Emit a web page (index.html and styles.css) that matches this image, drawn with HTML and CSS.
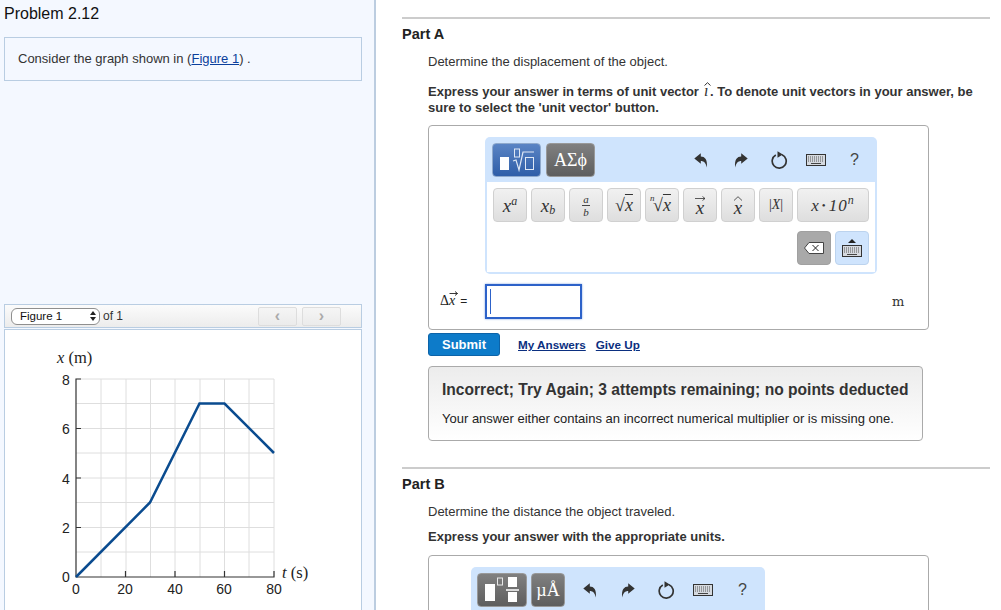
FILE: index.html
```html
<!DOCTYPE html>
<html lang="en">
<head>
<meta charset="utf-8">
<title>Problem 2.12</title>
<link rel="stylesheet" href="styles.css">
</head>
<body>
<svg class="defs" width="0" height="0" aria-hidden="true">
  <symbol id="i-undo" viewBox="0 0 14 15"><path d="M0.300 5.500 L6.800 0.300 V3.400 C10.800 3.400 13.800 6.500 12.800 14.500 C11.800 10 10 8 6.800 8 V10.800 Z" fill="#333"/></symbol>
  <symbol id="i-redo" viewBox="0 0 14 15"><path d="M13.700 5.500 L7.200 0.300 V3.400 C3.200 3.400 0.200 6.500 1.200 14.500 C2.200 10 4 8 7.200 8 V10.800 Z" fill="#333"/></symbol>
  <symbol id="i-reset" viewBox="0 0 18 18"><path d="M5.800 4 A7 7 0 1 0 12 3.700" fill="none" stroke="#333" stroke-width="1.700"/><path d="M7.500 0.300 L12.800 3.500 L7.500 6.700 Z" fill="#333"/></symbol>
  <symbol id="i-kbd" viewBox="0 0 20 12"><rect x="0.500" y="0.500" width="19" height="11" fill="#d5d9df" stroke="#333"/><path d="M2 3h16M2 5h16M2 7h16" stroke="#555" stroke-dasharray="1 1"/><path d="M5 9.500h10" stroke="#444"/></symbol>
</svg>
<div class="page">
  <aside class="side">
    <h1 class="problem-title">Problem 2.12</h1>
    <div class="intro">Consider the graph shown in (<a href="#">Figure 1</a>) .</div>
    <div class="spacer"></div>
    <div class="figure-bar">
      <div class="figure-select"><span>Figure 1</span><span class="updown"><i class="up"></i><i class="down"></i></span></div>
      <span class="of">of 1</span>
      <div class="pager">
        <span class="page-btn">&lsaquo;</span>
        <span class="page-btn">&rsaquo;</span>
      </div>
    </div>
    <div class="figure-box">
      <svg class="graph" width="362" height="281" viewBox="0 329 362 281">
        <g class="grid">
          <path d="M101 379V577M126 379V577M150.500 379V577M175 379V577M200 379V577M224.500 379V577M249 379V577M274 379V577"/>
          <path d="M76 379H274M76 403.500H274M76 428.500H274M76 453H274M76 478H274M76 502.500H274M76 527.500H274M76 552H274"/>
        </g>
        <path class="axis" d="M81 379H76V577H274V571M76 428.500H81M76 478H81M76 527.500H81M125.500 577V571M175 577V571M224.500 577V571"/>
        <path class="curve" d="M76 577 L150 502.500 L199.500 403.500 L224.500 403.500 L274 453"/>
        <text class="ax-serif" x="57" y="363"><tspan class="it">x</tspan> (m)</text>
        <text class="ax-serif" x="282" y="578"><tspan class="it">t</tspan> (s)</text>
        <g class="ax-num">
          <text x="66" y="385" text-anchor="middle">8</text>
          <text x="66" y="434" text-anchor="middle">6</text>
          <text x="66" y="484" text-anchor="middle">4</text>
          <text x="66" y="533" text-anchor="middle">2</text>
          <text x="66" y="582" text-anchor="middle">0</text>
          <text x="76" y="594" text-anchor="middle">0</text>
          <text x="125" y="594" text-anchor="middle">20</text>
          <text x="175" y="594" text-anchor="middle">40</text>
          <text x="224" y="594" text-anchor="middle">60</text>
          <text x="274" y="594" text-anchor="middle">80</text>
        </g>
      </svg>
    </div>
  </aside>
  <main class="main">
    <section class="part part-a">
      <h2 class="part-title">Part A</h2>
      <div class="part-body">
        <p class="prompt">Determine the displacement of the object.</p>
        <p class="instruction">Express your answer in terms of unit vector <span class="unit-i"><svg class="hat" width="7" height="4" viewBox="0 0 7 4"><path d="M.5 3.500L3.500 .7l3 2.800" fill="none" stroke="#333"/></svg>&imath;</span>. To denote unit vectors in your answer, be sure to select the 'unit vector' button.</p>
        <div class="answer-box">
          <div class="toolbar">
            <div class="tool-head">
              <button class="mode mode-on"><svg width="36" height="24" viewBox="0 0 36 24"><rect x="1" y="9" width="9" height="13" fill="#fff"/><rect x="15.500" y="1" width="5" height="8" fill="none" stroke="#dfe8f5"/><path d="M14 13l3-1 3 10 4-18h11" fill="none" stroke="#dfe8f5" stroke-width="1.200"/><rect x="26.500" y="9.500" width="8" height="12" fill="none" stroke="#dfe8f5"/></svg></button>
              <button class="mode mode-off">&Alpha;&Sigma;&#981;</button>
              <div class="actions">
                <svg class="act-undo" width="14" height="15"><use href="#i-undo"/></svg>
                <svg class="act-redo" width="14" height="15"><use href="#i-redo"/></svg>
                <svg class="act-reset" width="18" height="18"><use href="#i-reset"/></svg>
                <svg class="act-kbd" width="20" height="12"><use href="#i-kbd"/></svg>
                <span class="act-help">?</span>
              </div>
            </div>
            <div class="tool-body">
              <div class="key-row">
                <button class="key"><i>x<sup>a</sup></i></button>
                <button class="key"><i>x<sub>b</sub></i></button>
                <button class="key"><span class="frac"><i>a</i><i>b</i></span></button>
                <button class="key"><span class="root">&radic;<i class="over">x</i></span></button>
                <button class="key"><span class="root"><i class="idx">n</i>&radic;<i class="over">x</i></span></button>
                <button class="key"><span class="accent"><svg width="12" height="5" viewBox="0 0 12 5"><path d="M1 2.500h10M8.500 .5l2.500 2-2.500 2" fill="none" stroke="#333" stroke-width=".8"/></svg><i>x</i></span></button>
                <button class="key"><span class="accent"><svg width="10" height="5" viewBox="0 0 10 5"><path d="M1 4.500L5 .7l4 3.800" fill="none" stroke="#333" stroke-width=".8"/></svg><i>x</i></span></button>
                <button class="key abs">|<i>X</i>|</button>
                <button class="key wide"><i>x</i><span class="dot">&bull;</span><i>10<sup>n</sup></i></button>
              </div>
              <div class="key-row end">
                <button class="key del"><svg width="20" height="12" viewBox="0 0 20 12"><path d="M5 .5H19.500V11.500H5L.5 6Z" fill="#fff" stroke="#444"/><path d="M8.500 3l6 6M14.500 3l-6 6" stroke="#222"/></svg></button>
                <button class="key kbd-toggle"><svg width="20" height="20" viewBox="0 0 20 20"><path d="M6 5l4-4 4 4Z" fill="#222"/><rect x=".5" y="7.500" width="19" height="11" fill="#d5d9df" stroke="#333"/><path d="M2 10h16M2 12h16M2 14h16" stroke="#555" stroke-dasharray="1 1"/><path d="M5 16.500h10" stroke="#444"/></svg></button>
              </div>
            </div>
          </div>
          <div class="input-row">
            <span class="input-label">&Delta;<span class="vec"><svg class="vec-arrow" width="9" height="5" viewBox="0 0 9 5"><path d="M.5 2.500h8M6 .5l2.500 2-2.500 2" fill="none" stroke="#222" stroke-width=".9"/></svg>x</span><span class="eq">=</span></span>
            <div class="math-input"><span class="caret"></span></div>
            <span class="unit">m</span>
          </div>
        </div>
        <div class="submit-row">
          <button class="submit">Submit</button>
          <a class="link first" href="#">My Answers</a>
          <a class="link" href="#">Give Up</a>
        </div>
        <div class="feedback">
          <h3 class="fb-title">Incorrect; Try Again; 3 attempts remaining; no points deducted</h3>
          <p class="fb-text">Your answer either contains an incorrect numerical multiplier or is missing one.</p>
        </div>
      </div>
    </section>
    <section class="part part-b">
      <h2 class="part-title">Part B</h2>
      <div class="part-body">
        <p class="prompt">Determine the distance the object traveled.</p>
        <p class="instruction single">Express your answer with the appropriate units.</p>
        <div class="answer-box cut">
          <div class="toolbar small">
            <div class="tool-head">
              <button class="mode mode-off units"><svg width="36" height="26" viewBox="0 0 36 26"><rect x="1" y="7" width="10" height="17" fill="#fff"/><rect x="13.500" y="1" width="5" height="7" fill="none" stroke="#e8e8e8"/><rect x="24" y="0" width="9" height="10" fill="#fff"/><path d="M22 13h13" stroke="#fff" stroke-width="1.500"/><rect x="24" y="15" width="9" height="10" fill="#fff"/></svg></button>
              <button class="mode mode-off unit-sym">&micro;&Aring;</button>
              <div class="actions">
                <svg class="act-undo" width="14" height="15"><use href="#i-undo"/></svg>
                <svg class="act-redo" width="14" height="15"><use href="#i-redo"/></svg>
                <svg class="act-reset" width="18" height="18"><use href="#i-reset"/></svg>
                <svg class="act-kbd" width="20" height="12"><use href="#i-kbd"/></svg>
                <span class="act-help">?</span>
              </div>
            </div>
          </div>
        </div>
      </div>
    </section>
  </main>
</div>
</body>
</html>
```
FILE: styles.css
```css
* { box-sizing: border-box; }
html, body { margin: 0; height: 610px; overflow: hidden; background: #fff; }
body { font-family: "Liberation Sans", Arial, sans-serif; color: #222; font-size: 13px; }
.defs { position: absolute; }
button { font-family: inherit; padding: 0; margin: 0; }
.page { display: flex; height: 610px; }

/* left column */
.side { width: 376px; flex: none; height: 610px; background: #f4f8ff; border-right: 2px solid #bccde0; padding: 0 12px 0 4px; display: flex; flex-direction: column; }
.problem-title { margin: 4px 0 0; font-size: 16px; line-height: 20px; font-weight: 400; color: #111; }
.intro { margin-top: 13px; height: 44px; border: 1px solid #b9cde2; padding: 0 13px; line-height: 41px; font-size: 13px; color: #333; }
.intro a { color: #0b3f9c; }
.spacer { height: 223px; flex: none; }
.figure-bar { height: 24px; flex: none; border: 1px solid #b9cde2; background: linear-gradient(#fbfbfb, #ececec); display: flex; align-items: center; padding-left: 6px; font-size: 12px; color: #333; }
.figure-select { width: 89px; height: 17px; border: 1px solid #8f8f8f; border-radius: 6px; background: #fff; display: flex; align-items: center; justify-content: space-between; padding: 0 3px 0 8px; color: #111; font-size: 11.500px; }
.updown { display: flex; flex-direction: column; gap: 2px; }
.updown i { display: block; width: 0; height: 0; border-left: 3px solid transparent; border-right: 3px solid transparent; }
.updown .up { border-bottom: 4px solid #222; }
.updown .down { border-top: 4px solid #222; }
.of { margin-left: 3px; }
.pager { margin-left: 135px; display: flex; gap: 5px; }
.page-btn { width: 39px; height: 19px; border: 1px solid #ddd; border-radius: 2px; background: linear-gradient(#f5f5f5, #ebebeb); color: #aaa; text-align: center; font-size: 16px; line-height: 16px; font-weight: 700; }
.figure-box { margin-top: 1px; flex: 1; background: #fff; border: 1px solid #b9cde2; border-bottom: 0; margin-left: 0; position: relative; overflow: hidden; }
.graph { display: block; margin: -1px 0 0 -5px; }
.grid path { stroke: #dedede; stroke-width: 1; fill: none; }
.axis { stroke: #333; stroke-width: 1.200; fill: none; }
.curve { stroke: #0a4b8f; stroke-width: 2.500; fill: none; stroke-linejoin: miter; }
.ax-serif { font-family: "Liberation Serif", serif; font-size: 16.500px; fill: #222; }
.it { font-style: italic; }
.ax-num text { font-size: 14px; fill: #222; }

/* right column */
.main { flex: 1; padding: 17px 11px 0 26px; min-width: 0; }
.part { border-top: 2px solid #ccc; }
.part-title { margin: 0; font-size: 14.500px; line-height: 18px; font-weight: 700; color: #222; padding-top: 6px; }
.part-body { padding-left: 26px; }
.prompt { margin: 11px 0 0; font-size: 13px; line-height: 16px; color: #333; }
.instruction { margin: 14px 0 0; font-size: 13px; line-height: 16px; font-weight: 700; color: #333; }
.unit-i { font-family: "Liberation Serif", serif; font-weight: 400; font-style: italic; font-size: 16px; line-height: 10px; position: relative; padding: 0 1.500px; }
.hat { position: absolute; left: 1px; top: 0; }
.answer-box { margin-top: 9px; width: 501px; height: 205px; border: 1px solid #aaa; border-radius: 4px; padding: 11px 0 0 56px; background: #fff; }
.toolbar { width: 392px; height: 137px; background: #cfe4fd; border-radius: 5px; padding: 0 2px 2px; display: flex; flex-direction: column; }
.tool-head { height: 45px; flex: none; display: flex; align-items: flex-start; padding: 6px 0 0 5px; gap: 5px; }
.mode { width: 49px; height: 34px; border: 1px solid #9aa; border-radius: 4px; color: #fff; display: flex; align-items: center; justify-content: center; font-family: "Liberation Serif", serif; font-size: 18px; }
.mode-on { background: linear-gradient(#5a84c4, #2f5ea8); border-color: #8fa9cc; }
.mode-off { background: linear-gradient(#808080, #5e5e5e); border-color: #999; }
.actions { flex: 1; display: flex; align-items: center; height: 34px; position: relative; padding-left: 94px; }
.act-undo { margin-left: 0; }
.act-redo { margin-left: 26px; }
.act-reset { margin-left: 22px; }
.act-kbd { margin-left: 18px; }
.act-help { margin-left: 24px; font-size: 16px; color: #444; }
.tool-body { flex: 1; background: #fff; padding: 6px 0 0 6px; display: flex; flex-direction: column; gap: 9px; }
.key-row { display: flex; gap: 4px; }
.key-row.end { justify-content: flex-end; padding-right: 6px; }
.key { width: 34px; height: 34px; border: 1px solid #d0d0d0; border-radius: 4px; background: linear-gradient(#f1f1f1, #dedede); color: #333; font-family: "Liberation Serif", serif; font-size: 19px; line-height: 1; display: flex; align-items: center; justify-content: center; }
.key sup { font-size: 12px; line-height: 0; }
.key sub { font-size: 12px; line-height: 0; vertical-align: -2px; }
.key.wide { width: 72px; font-size: 17px; letter-spacing: 1px; }
.key.abs { font-size: 14px; }
.dot { font-size: 11px; margin: 0 2px; }
.frac { display: flex; flex-direction: column; font-size: 11px; line-height: 12px; }
.frac i:first-child { border-bottom: 1px solid #444; padding: 0 1px; }
.root { font-size: 18px; position: relative; }
.root .over { text-decoration: overline; }
.root .idx { font-size: 9px; position: absolute; left: -3px; top: -2px; }
.accent { display: flex; flex-direction: column; align-items: center; line-height: 13px; font-size: 19px; }
.accent svg { display: block; }
.key.del { background: #a9a9a9; border-color: #a0a0a0; }
.key.kbd-toggle { background: #cfe4fd; border-color: #bcd3ee; }
.input-row { display: flex; align-items: center; height: 34px; margin: 10px 0 0 -45px; position: relative; }
.input-label { width: 45px; flex: none; font-family: "Liberation Serif", serif; font-size: 14px; color: #222; white-space: nowrap; }
.eq { margin-left: 5px; font-family: "Liberation Sans", sans-serif; font-size: 12px; }
.vec { font-style: italic; position: relative; display: inline-block; }
.vec-arrow { position: absolute; left: 0; top: -2px; }
.math-input { width: 97px; height: 35px; flex: none; border: 2px solid #2d62c9; box-shadow: 0 0 2px #7fa2e0; background: #fff; padding: 3px 0 0 3px; }
.caret { display: block; width: 1px; height: 25px; background: #2d62c9; }
.unit { margin-left: 310px; font-family: "DejaVu Serif", "Liberation Serif", serif; font-size: 13px; color: #333; }
.submit-row { display: flex; align-items: center; margin-top: 3px; height: 23px; }
.submit { width: 72px; height: 23px; border: 1px solid #0c63a8; border-radius: 3px; background: #0d7bc9; color: #fff; font-weight: 700; font-size: 13px; }
.link { font-size: 11.700px; font-weight: 700; color: #0b2f80; margin-left: 10px; }
.link.first { margin-left: 18px; }
.feedback { margin-top: 10px; width: 495px; height: 75px; border: 1px solid #aaa; border-radius: 4px; background: linear-gradient(#ececec, #fff); padding: 14px 13px 0; }
.fb-title { margin: 0; font-size: 15.600px; line-height: 18px; font-weight: 700; color: #333; }
.fb-text { margin: 12px 0 0; font-size: 13px; line-height: 16px; color: #222; }
.part-b { margin-top: 26px; }
.part-b .prompt { margin-top: 11px; }
.instruction.single { margin-top: 9px; }
.answer-box.cut { margin-top: 10px; height: 70px; padding: 11px 0 0 42px; }
.toolbar.small { width: 294px; height: 60px; }
.toolbar.small .tool-head { gap: 4px; padding-left: 4px; }
.toolbar.small .actions { padding-left: 14px; }
.mode.units { width: 50px; }
.mode.unit-sym { width: 34px; font-size: 18px; }
.toolbar.small .act-redo { margin-left: 24px; }
.toolbar.small .act-reset { margin-left: 22px; }
.toolbar.small .act-kbd { margin-left: 18px; }
.toolbar.small .act-help { margin-left: 25px; }
```
